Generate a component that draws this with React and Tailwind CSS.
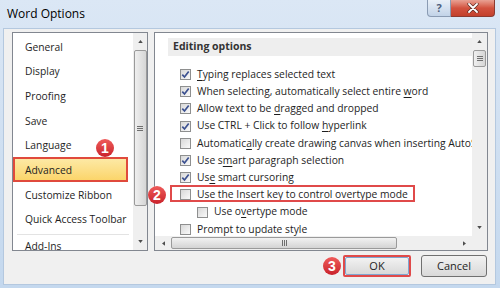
import React from "react";

const navItems = [
  "General",
  "Display",
  "Proofing",
  "Save",
  "Language",
  "Advanced",
  "Customize Ribbon",
  "Quick Access Toolbar",
];

const rows = [
  { checked: true, parts: ["", "T", "yping replaces selected text"] },
  { checked: true, parts: ["When selecting, automatically select entire ", "w", "ord"] },
  { checked: true, parts: ["Allow text to be ", "d", "ragged and dropped"] },
  { checked: true, parts: ["Use CTRL + Click to follow ", "h", "yperlink"] },
  { checked: false, parts: ["Automatic", "a", "lly create drawing canvas when inserting AutoShapes"] },
  { checked: true, parts: ["Use s", "m", "art paragraph selection"] },
  { checked: true, parts: ["Us", "e", " smart cursoring"] },
  { checked: false, parts: ["Use the Insert key to control ", "o", "vertype mode"], marked: true },
  { checked: false, parts: ["Use o", "v", "ertype mode"], indent: true },
  { checked: false, parts: ["Prompt to update style", "", ""] },
];

const Check = ({ checked }) => (
  <span className="flex h-[11px] w-[11px] shrink-0 items-center justify-center border border-[#8e8f8f] bg-gradient-to-br from-[#d8d8d8] to-[#fafafa]">
    {checked && (
      <svg viewBox="0 0 9 9" className="h-[9px] w-[9px]">
        <path d="M1.3 4.6 L3.5 7 L7.7 1.5" fill="none" stroke="#3c5190" strokeWidth="1.7" />
      </svg>
    )}
  </span>
);

const Arrow = ({ dir }) => {
  const d = {
    up: "M0 4 L3 0 L6 4 Z",
    down: "M0 0 L6 0 L3 4 Z",
    left: "M4 0 L4 6 L0 3 Z",
    right: "M0 0 L0 6 L4 3 Z",
  }[dir];
  const vert = dir === "up" || dir === "down";
  return (
    <svg viewBox={vert ? "0 0 6 4" : "0 0 4 6"} className={vert ? "h-[3px] w-[5px]" : "h-[5px] w-[3px]"}>
      <path d={d} fill="#4d4d4d" />
    </svg>
  );
};

const Grip = ({ vertical }) => (
  <div className={vertical ? "flex flex-col gap-[1px]" : "flex gap-[1px]"}>
    {[0, 1, 2].map((i) => (
      <span
        key={i}
        className={vertical ? "h-[1px] w-[6px] bg-[#6f6f6f]" : "h-[6px] w-[1px] bg-[#6f6f6f]"}
      />
    ))}
  </div>
);

const Badge = ({ n, className }) => (
  <span
    className={`absolute flex h-[18px] w-[18px] items-center justify-center rounded-full bg-gradient-to-b from-[#ef5a5a] to-[#c91f2a] text-[14px] font-bold leading-none text-white shadow-[0_0_1px_#fff] [font-family:'Liberation_Sans',Arial,sans-serif] ${className}`}
  >
    {n}
  </span>
);

export default function App() {
  return (
    <div className="relative flex h-[288px] w-[500px] flex-col overflow-hidden bg-gradient-to-b from-[#dbe7f5] to-[#c4d8ee] text-[10.3px] text-[#1e1e1e] [font-family:'Open_Sans','Noto_Sans',sans-serif]">
      {/* title bar */}
      <div className="flex h-[28px] shrink-0 items-start justify-between">
        <div className="pl-[7px] pt-[5px] text-[12px] text-black">Word Options</div>
        <div className="mr-[5px] flex">
          <div className="flex h-[17px] w-[24px] items-center justify-center rounded-bl-[4px] border border-t-0 border-[#8a9bb3] bg-gradient-to-b from-[#e9f0f8] to-[#c2d3e8] text-[11px] font-bold text-[#4d5f7c]">
            ?
          </div>
          <div className="flex h-[17px] w-[44px] items-center justify-center rounded-br-[4px] border border-l-0 border-t-0 border-[#8c3a30] bg-gradient-to-b from-[#e8a194] via-[#d2523f] to-[#c3402c]">
            <svg viewBox="0 0 12 10" className="h-[10px] w-[12px]">
              <path d="M2 1 L10 9 M10 1 L2 9" stroke="#5a2a22" strokeWidth="3.2" strokeLinecap="round" />
              <path d="M2 1 L10 9 M10 1 L2 9" stroke="#ffffff" strokeWidth="1.8" strokeLinecap="round" />
            </svg>
          </div>
        </div>
      </div>

      {/* body */}
      <div className="mx-[3px] mr-[4px] flex h-[257px] flex-col border border-[#b4c8df] bg-[#f0f0f0]">
        <div className="flex gap-[6px] pl-[8px] pt-[3px]">
          {/* left nav */}
          <div className="flex h-[219px] w-[136px] border border-[#828790] bg-white">
            <div className="relative flex-1 overflow-hidden pt-[2px]">
              {navItems.map((item) => (
                <div key={item} className="flex h-[24.7px] items-center whitespace-nowrap pl-[12px]">
                  {item}
                </div>
              ))}
              <div className="ml-[4px] mr-[4px] mt-[1px] h-[1px] bg-[#e3e3e3]" />
              <div className="flex h-[24px] items-center pl-[12px]">Add-Ins</div>
              <div className="absolute left-0 top-[124px] h-[25px] w-[115px] border-2 border-[#e04a3c] bg-gradient-to-b from-[#fde9a4] to-[#fbd56a]" />
              <div className="absolute left-[12px] top-[125px] flex h-[25px] items-center">Advanced</div>
            </div>
            <div className="flex w-[14px] flex-col items-center bg-[#efefef]">
              <div className="flex h-[17px] items-center"><Arrow dir="up" /></div>
              <div className="flex h-[156px] w-[13px] items-center justify-center rounded-[2px] border border-[#9a9a9a] bg-gradient-to-r from-[#efefef] to-[#d6d6d6]">
                <Grip vertical />
              </div>
              <div className="flex-1" />
              <div className="flex h-[17px] items-center"><Arrow dir="down" /></div>
            </div>
          </div>

          {/* right options */}
          <div className="flex h-[219px] w-[334px] flex-col border border-[#828790] bg-white">
            <div className="flex flex-1 overflow-hidden">
              <div className="flex-1 overflow-hidden">
                <div className="ml-[13px] mt-[5px] flex h-[18px] items-center bg-[#eeeeee] pl-[5px] text-[10.5px] font-bold text-[#333]">
                  Editing options
                </div>
                <div className="mt-[10px]">
                  {rows.map((r, i) => (
                    <div
                      key={i}
                      className={`flex h-[17.2px] items-center whitespace-nowrap ${r.indent ? "pl-[42px]" : "pl-[25px]"}`}
                    >
                      <div className="relative flex items-center gap-[6px]">
                        <Check checked={r.checked} />
                        <span>
                          {r.parts[0]}
                          <span className="underline underline-offset-2">{r.parts[1]}</span>
                          {r.parts[2]}
                        </span>
                        {r.marked && (
                          <span className="absolute -left-[10px] -right-[7px] -top-[2px] h-[17px] border-2 border-[#e04a4a]" />
                        )}
                      </div>
                    </div>
                  ))}
                </div>
              </div>
              <div className="flex w-[15px] flex-col items-center bg-[#efefef]">
                <div className="flex h-[17px] items-center"><Arrow dir="up" /></div>
                <div className="flex h-[17px] w-[13px] items-center justify-center rounded-[2px] border border-[#9a9a9a] bg-gradient-to-r from-[#efefef] to-[#d6d6d6]">
                  <Grip vertical />
                </div>
                <div className="flex-1" />
                <div className="flex h-[17px] items-center"><Arrow dir="down" /></div>
              </div>
            </div>
            <div className="flex h-[14px] shrink-0 items-center bg-[#efefef]">
              <div className="flex w-[16px] justify-center"><Arrow dir="left" /></div>
              <div className="flex h-[12px] w-[226px] items-center justify-center rounded-[2px] border border-[#9a9a9a] bg-gradient-to-b from-[#f2f2f2] to-[#d4d4d4]">
                <Grip />
              </div>
              <div className="flex-1" />
              <div className="flex w-[16px] justify-center"><Arrow dir="right" /></div>
              <div className="w-[15px]" />
            </div>
          </div>
        </div>

        {/* buttons */}
        <div className="mr-[8px] mt-[4px] flex justify-end gap-[10px] text-[11px]">
          <div className="rounded-[2px] border-2 border-[#e04a4a]">
            <div className="flex h-[18px] w-[64px] items-center justify-center rounded-[2px] border border-[#7fa6d0] bg-gradient-to-b from-[#f2f2f2] to-[#d9d9d9]">
              OK
            </div>
          </div>
          <div className="flex h-[22px] w-[66px] items-center justify-center rounded-[3px] border border-[#707070] bg-gradient-to-b from-[#f2f2f2] to-[#d9d9d9]">
            Cancel
          </div>
        </div>
      </div>

      <Badge n="1" className="left-[96px] top-[139px]" />
      <Badge n="2" className="left-[148px] top-[186px]" />
      <Badge n="3" className="left-[323px] top-[257px]" />
    </div>
  );
}
